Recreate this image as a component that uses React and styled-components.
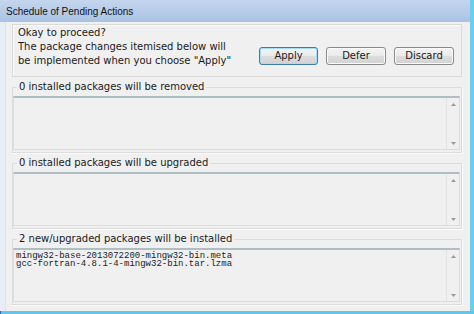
import styled, { createGlobalStyle } from "styled-components";

const Global = createGlobalStyle`
  html, body { margin: 0; padding: 0; background: #f0f0f0; }
  body { font-family: "DejaVu Sans", Verdana, sans-serif; }
`

const Window = styled.div`
  width: 474px;
  height: 314px;
  display: flex;
  flex-direction: column;
  background: #f0f0f0;
  overflow: hidden;
`

const TitleBar = styled.div`
  height: 22px;
  flex: none;
  display: flex;
  align-items: center;
  padding-left: 6px;
  background: linear-gradient(#c4d6ee, #aac3e4);
  border-right: 4px solid #6ccdf0;
  font-family: "Liberation Sans", Arial, sans-serif;
  font-size: 10px;
  color: #111;
`

const Body = styled.div`
  flex: 1;
  display: flex;
  min-height: 0;
`

const LeftFrame = styled.div`
  width: 5px;
  background: #e8eef6;
  border-right: 1px solid #dde3ea;
`

const RightFrame = styled.div`
  width: 4px;
  background: #6ccdf0;
`

const BottomFrame = styled.div`
  height: 3px;
  flex: none;
  background: #5fc6ec;
  border-left: 1px solid #2a6fa8;
`

const Content = styled.div`
  flex: 1;
  display: flex;
  flex-direction: column;
  gap: 3px;
  padding: 2px 8px 6px 6px;
  min-width: 0;
`

const PromptBox = styled.div`
  border: 1px solid #dadada;
  box-shadow: inset 1px 1px 0 #fafafa;
  padding: 1px 7px 8px 5px;
  font-size: 10px;
  line-height: 14px;
  color: #1a1a1a;
`

const PromptRow = styled.div`
  display: flex;
  align-items: center;
  justify-content: space-between;
`

const Buttons = styled.div`
  display: flex;
  gap: 8px;
  margin-top: 3px;
`

const Button = styled.button`
  width: ${(p) => p.$w}px;
  height: 18px;
  padding: 0;
  font-family: "DejaVu Sans", Verdana, sans-serif;
  font-size: 10px;
  color: #1a1a1a;
  border-radius: 3px;
  border: 1px solid ${(p) => (p.$primary ? "#3d7bad" : "#8a8a8a")};
  background: linear-gradient(#f4f4f4 0%, #ebebeb 48%, #dddddd 52%, #d2d2d2 100%);
  box-shadow: inset 0 0 0 1px ${(p) => (p.$primary ? "#a8dcf4" : "#fbfbfb")};
`

const Group = styled.fieldset`
  margin: 0;
  padding: 2px 1px 2px 0;
  border: 1px solid #dcdcdc;
  box-shadow: 1px 1px 0 #fbfbfb;
  min-width: 0;
  display: flex;
  flex-direction: column;
  ${(p) => p.$grow && "flex: 1;"}
`

const Legend = styled.legend`
  padding: 0 2px;
  margin-left: 4px;
  font-size: 10px;
  line-height: 14px;
  color: #1a1a1a;
`

const ListBox = styled.div`
  height: ${(p) => (p.$grow ? "auto" : "54px")};
  ${(p) => p.$grow && "flex: 1;"}
  box-sizing: border-box;
  display: flex;
  background: #f0f0f0;
  border: 1px solid #d6dee3;
  border-top: 2px solid #aebfc4;
`

const ListText = styled.pre`
  flex: 1;
  margin: 0;
  padding: 2px 2px;
  font-family: "Liberation Mono", "Courier New", monospace;
  font-size: 9px;
  line-height: 8px;
  color: #222;
`

const ScrollBar = styled.div`
  width: 12px;
  display: flex;
  flex-direction: column;
  justify-content: space-between;
  align-items: center;
  padding: 5px 0 4px;
  border-left: 1px solid #e2e2e2;
`

const Arrow = ({ down }) => (
  <svg width="5" height="3" viewBox="0 0 5 3">
    <path d={down ? "M0 0h5L2.5 3z" : "M0 3h5L2.5 0z"} fill="#9a9a9a" />
  </svg>
)

const List = ({ lines, grow }) => (
  <ListBox $grow={grow}>
    <ListText>{lines.join("\n")}</ListText>
    <ScrollBar>
      <Arrow />
      <Arrow down />
    </ScrollBar>
  </ListBox>
)

const groups = [
  { label: "0 installed packages will be removed", lines: [] },
  { label: "0 installed packages will be upgraded", lines: [] },
  {
    label: "2 new/upgraded packages will be installed",
    lines: [
      "mingw32-base-2013072200-mingw32-bin.meta",
      "gcc-fortran-4.8.1-4-mingw32-bin.tar.lzma",
    ],
    grow: true,
  },
]

export default function App() {
  return (
    <>
      <Global />
      <Window>
        <TitleBar>Schedule of Pending Actions</TitleBar>
        <Body>
          <LeftFrame />
          <Content>
            <PromptBox>
              <div>Okay to proceed?</div>
              <PromptRow>
                <div>
                  The package changes itemised below will
                  <br />
                  be implemented when you choose "Apply"
                </div>
                <Buttons>
                  <Button $w={59} $primary>Apply</Button>
                  <Button $w={60}>Defer</Button>
                  <Button $w={60}>Discard</Button>
                </Buttons>
              </PromptRow>
            </PromptBox>
            {groups.map((g) => (
              <Group key={g.label} $grow={g.grow}>
                <Legend>{g.label}</Legend>
                <List lines={g.lines} grow={g.grow} />
              </Group>
            ))}
          </Content>
          <RightFrame />
        </Body>
        <BottomFrame />
      </Window>
    </>
  )
}
